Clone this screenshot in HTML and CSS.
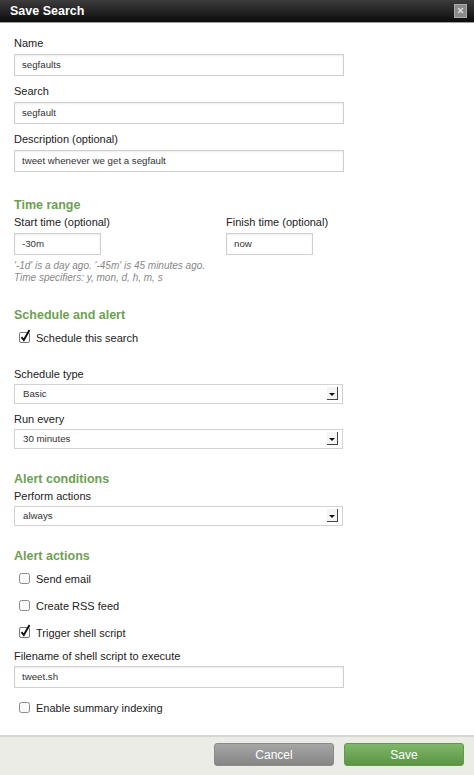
FILE: index.html
```html
<!DOCTYPE html>
<html>
<head>
<meta charset="utf-8">
<link rel="stylesheet" href="styles.css">
</head>
<body>
<div class="dialog">
  <div class="titlebar">
    <span class="title">Save Search</span>
    <span class="close"><svg width="7" height="7" viewBox="0 0 7 7"><path d="M1 1L6 6M6 1L1 6" stroke="#d8d8d8" stroke-width="1.6"/></svg></span>
  </div>
  <div class="content">
    <div class="field">
      <div class="label">Name</div>
      <div class="input full">segfaults</div>
    </div>
    <div class="field">
      <div class="label">Search</div>
      <div class="input full">segfault</div>
    </div>
    <div class="field">
      <div class="label">Description (optional)</div>
      <div class="input full">tweet whenever we get a segfault</div>
    </div>

    <h2 class="section first">Time range</h2>
    <div class="timerow">
      <div class="tcol">
        <div class="label">Start time (optional)</div>
        <div class="input short">-30m</div>
      </div>
      <div class="tcol">
        <div class="label">Finish time (optional)</div>
        <div class="input short">now</div>
      </div>
    </div>
    <div class="help">'-1d' is a day ago. '-45m' is 45 minutes ago.<br>Time specifiers: y, mon, d, h, m, s</div>

    <h2 class="section">Schedule and alert</h2>
    <div class="check">
      <span class="box"><svg width="13" height="14" viewBox="0 0 13 14"><rect x="0.5" y="3.5" width="10" height="10" rx="1.5" fill="#fff" stroke="#777"/><path d="M2.5 8.2L4.8 11L10.5 1" fill="none" stroke="#111" stroke-width="1.9"/></svg></span>
      <span>Schedule this search</span>
    </div>

    <div class="field sel gap">
      <div class="label">Schedule type</div>
      <div class="select">Basic<span class="arrow"><span class="tri"></span></span></div>
    </div>
    <div class="field sel">
      <div class="label">Run every</div>
      <div class="select">30 minutes<span class="arrow"><span class="tri"></span></span></div>
    </div>

    <h2 class="section">Alert conditions</h2>
    <div class="field sel">
      <div class="label">Perform actions</div>
      <div class="select">always<span class="arrow"><span class="tri"></span></span></div>
    </div>

    <h2 class="section">Alert actions</h2>
    <div class="check">
      <span class="box"><svg width="13" height="14" viewBox="0 0 13 14"><rect x="0.5" y="3.5" width="10" height="10" rx="2" fill="#fafafa" stroke="#8a8a8a"/></svg></span>
      <span>Send email</span>
    </div>
    <div class="check spaced">
      <span class="box"><svg width="13" height="14" viewBox="0 0 13 14"><rect x="0.5" y="3.5" width="10" height="10" rx="2" fill="#fafafa" stroke="#8a8a8a"/></svg></span>
      <span>Create RSS feed</span>
    </div>
    <div class="check spaced">
      <span class="box"><svg width="13" height="14" viewBox="0 0 13 14"><rect x="0.5" y="3.5" width="10" height="10" rx="1.5" fill="#fff" stroke="#777"/><path d="M2.5 8.2L4.8 11L10.5 1" fill="none" stroke="#111" stroke-width="1.9"/></svg></span>
      <span>Trigger shell script</span>
    </div>
    <div class="field small">
      <div class="label">Filename of shell script to execute</div>
      <div class="input full">tweet.sh</div>
    </div>
    <div class="check last">
      <span class="box"><svg width="13" height="14" viewBox="0 0 13 14"><rect x="0.5" y="3.5" width="10" height="10" rx="2" fill="#fafafa" stroke="#8a8a8a"/></svg></span>
      <span>Enable summary indexing</span>
    </div>
  </div>
  <div class="footer">
    <button class="btn cancel">Cancel</button>
    <button class="btn save">Save</button>
  </div>
</div>
</body>
</html>
```

FILE: styles.css
```css
html, body {
  margin: 0;
  padding: 0;
  background: #fff;
}
body {
  font-family: "Liberation Sans", Arial, sans-serif;
  color: #222;
  font-size: 11px;
}
.dialog {
  width: 474px;
  height: 775px;
  display: flex;
  flex-direction: column;
}
.titlebar {
  height: 22px;
  flex: none;
  background: linear-gradient(#3c3c3c, #0c0c0c);
  border-bottom: 1px solid #9c9c9c;
  display: flex;
  align-items: center;
  justify-content: space-between;
  padding: 0 7px 0 10px;
}
.title {
  color: #fff;
  font-weight: bold;
  font-size: 12.5px;
  line-height: 22px;
}
.close {
  width: 11px;
  height: 12px;
  background: #8a8a8a;
  border: 1px solid #aaa;
  display: flex;
  align-items: center;
  justify-content: center;
  margin-top: -1px;
}
.content {
  padding: 13px 14px 0 14px;
  flex: 1;
}
.label {
  line-height: 14px;
  margin-bottom: 4px;
  font-size: 11px;
}
.field {
  margin-bottom: 8px;
}
.field.sel .label {
  margin-bottom: 3px;
}
.field.gap {
  margin-top: 22px;
}
.field.small {
  margin-top: 9px;
}
.field.small .label {
  margin-bottom: 3px;
}
.input {
  box-sizing: border-box;
  height: 22px;
  border: 1px solid #cfcfcf;
  box-shadow: inset 0 1px 2px rgba(0,0,0,0.08);
  font-size: 9.7px;
  color: #333;
  padding: 0 7px;
  line-height: 20px;
  background: #fff;
}
.input.full {
  width: 330px;
}
.input.short {
  width: 87px;
}
.section {
  color: #6e9f54;
  font-size: 12.5px;
  font-weight: bold;
  line-height: 16px;
  margin: 22px 0 2px 0;
}
.section.first {
  margin-top: 25px;
}
.timerow {
  display: flex;
}
.tcol {
  width: 212px;
}
.help {
  font-style: italic;
  color: #888;
  font-size: 10px;
  line-height: 12px;
  margin-top: 5px;
  margin-bottom: 23px;
}
.check {
  display: flex;
  align-items: center;
  height: 14px;
  margin: 8px 0 0 5px;
}
.check .box {
  width: 13px;
  height: 14px;
  margin-right: 4px;
  display: block;
  margin-top: -4px;
}
.check .box svg {
  display: block;
}
.check.spaced {
  margin-top: 13px;
}
.check.last {
  margin-top: 13px;
}
.select {
  box-sizing: border-box;
  position: relative;
  width: 329px;
  height: 20px;
  border: 1px solid #d2d2d2;
  font-size: 9.7px;
  color: #333;
  padding: 0 8px;
  line-height: 18px;
  background: #fff;
}
.select .arrow {
  position: absolute;
  right: 4px;
  top: 2px;
  width: 10px;
  height: 12px;
  border-right: 1px solid #444;
  border-bottom: 1px solid #444;
  background: #f4f4f4;
  display: flex;
  align-items: center;
  justify-content: center;
}
.select .tri {
  width: 0;
  height: 0;
  border-left: 3px solid transparent;
  border-right: 3px solid transparent;
  border-top: 3px solid #111;
  margin-top: 2px;
}
.footer {
  height: 40px;
  flex: none;
  border-top: 2px solid #d6d6d2;
  background: #ececE7;
  display: flex;
  justify-content: flex-end;
  align-items: flex-start;
  padding: 6px 10px 0 0;
  box-sizing: border-box;
  gap: 10px;
}
.btn {
  width: 120px;
  height: 23px;
  border-radius: 3px;
  color: #fff;
  font-family: "Liberation Sans", Arial, sans-serif;
  font-size: 12px;
  padding: 0;
  cursor: pointer;
}
.cancel {
  background: linear-gradient(#a6a6a6, #858585);
  border: 1px solid #8a8a8a;
}
.save {
  background: linear-gradient(#80b76a, #5a9444);
  border: 1px solid #5f9a49;
}
```
